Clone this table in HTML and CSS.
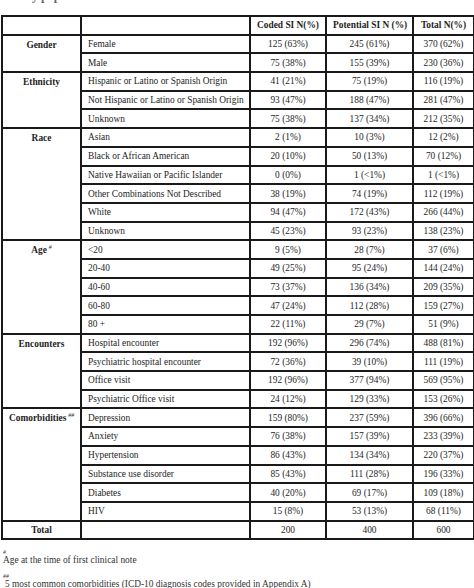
FILE: index.html
```html
<!DOCTYPE html>
<html>
<head>
<meta charset="utf-8">
<link rel="stylesheet" href="styles.css">
</head>
<body>
<div class="caption-clip"><span class="caption-text">Study population</span></div>
<table class="demo">
  <colgroup>
    <col class="c1"><col class="c2"><col class="c3"><col class="c4"><col class="c5">
  </colgroup>
  <thead>
    <tr><th></th><th></th><th>Coded SI N(%)</th><th>Potential SI N (%)</th><th>Total N(%)</th></tr>
  </thead>
  <tbody>
    <tr><td class="grp" rowspan="2">Gender</td><td class="cat">Female</td><td>125 (63%)</td><td>245 (61%)</td><td>370 (62%)</td></tr>
    <tr><td class="cat">Male</td><td>75 (38%)</td><td>155 (39%)</td><td>230 (36%)</td></tr>
    <tr><td class="grp" rowspan="3">Ethnicity</td><td class="cat">Hispanic or Latino or Spanish Origin</td><td>41 (21%)</td><td>75 (19%)</td><td>116 (19%)</td></tr>
    <tr><td class="cat">Not Hispanic or Latino or Spanish Origin</td><td>93 (47%)</td><td>188 (47%)</td><td>281 (47%)</td></tr>
    <tr><td class="cat">Unknown</td><td>75 (38%)</td><td>137 (34%)</td><td>212 (35%)</td></tr>
    <tr><td class="grp" rowspan="6">Race</td><td class="cat">Asian</td><td>2 (1%)</td><td>10 (3%)</td><td>12 (2%)</td></tr>
    <tr><td class="cat">Black or African American</td><td>20 (10%)</td><td>50 (13%)</td><td>70 (12%)</td></tr>
    <tr><td class="cat">Native Hawaiian or Pacific Islander</td><td>0 (0%)</td><td>1 (&lt;1%)</td><td>1 (&lt;1%)</td></tr>
    <tr><td class="cat">Other Combinations Not Described</td><td>38 (19%)</td><td>74 (19%)</td><td>112 (19%)</td></tr>
    <tr><td class="cat">White</td><td>94 (47%)</td><td>172 (43%)</td><td>266 (44%)</td></tr>
    <tr><td class="cat">Unknown</td><td>45 (23%)</td><td>93 (23%)</td><td>138 (23%)</td></tr>
    <tr><td class="grp" rowspan="5">Age<sup>#</sup></td><td class="cat">&lt;20</td><td>9 (5%)</td><td>28 (7%)</td><td>37 (6%)</td></tr>
    <tr><td class="cat">20-40</td><td>49 (25%)</td><td>95 (24%)</td><td>144 (24%)</td></tr>
    <tr><td class="cat">40-60</td><td>73 (37%)</td><td>136 (34%)</td><td>209 (35%)</td></tr>
    <tr><td class="cat">60-80</td><td>47 (24%)</td><td>112 (28%)</td><td>159 (27%)</td></tr>
    <tr><td class="cat">80 +</td><td>22 (11%)</td><td>29 (7%)</td><td>51 (9%)</td></tr>
    <tr><td class="grp" rowspan="4">Encounters</td><td class="cat">Hospital encounter</td><td>192 (96%)</td><td>296 (74%)</td><td>488 (81%)</td></tr>
    <tr><td class="cat">Psychiatric hospital encounter</td><td>72 (36%)</td><td>39 (10%)</td><td>111 (19%)</td></tr>
    <tr><td class="cat">Office visit</td><td>192 (96%)</td><td>377 (94%)</td><td>569 (95%)</td></tr>
    <tr><td class="cat">Psychiatric Office visit</td><td>24 (12%)</td><td>129 (33%)</td><td>153 (26%)</td></tr>
    <tr><td class="grp" rowspan="6">Comorbidities<sup>##</sup></td><td class="cat">Depression</td><td>159 (80%)</td><td>237 (59%)</td><td>396 (66%)</td></tr>
    <tr><td class="cat">Anxiety</td><td>76 (38%)</td><td>157 (39%)</td><td>233 (39%)</td></tr>
    <tr><td class="cat">Hypertension</td><td>86 (43%)</td><td>134 (34%)</td><td>220 (37%)</td></tr>
    <tr><td class="cat">Substance use disorder</td><td>85 (43%)</td><td>111 (28%)</td><td>196 (33%)</td></tr>
    <tr><td class="cat">Diabetes</td><td>40 (20%)</td><td>69 (17%)</td><td>109 (18%)</td></tr>
    <tr><td class="cat">HIV</td><td>15 (8%)</td><td>53 (13%)</td><td>68 (11%)</td></tr>
    <tr><td class="grp total">Total</td><td class="cat"></td><td>200</td><td>400</td><td>600</td></tr>
  </tbody>
</table>
<div class="notes">
  <p class="note"><sup>#</sup><br>Age at the time of first clinical note</p>
  <p class="note note2"><sup>##</sup><br><span class="indent">5 most common comorbidities (ICD-10 diagnosis codes provided in Appendix A)</span></p>
</div>
</body>
</html>
```

FILE: styles.css
```css
html, body {
  margin: 0;
  padding: 0;
  background: #ffffff;
}
body {
  font-family: "Liberation Serif", "Times New Roman", serif;
  font-size: 9.4px;
  color: #1e1e1e;
  width: 474px;
  height: 588px;
  overflow: hidden;
}
.caption-clip {
  height: 5px;
  overflow: hidden;
  margin-bottom: 10px;
}
.caption-text {
  display: block;
  font-weight: bold;
  font-size: 12px;
  line-height: 12px;
  margin-top: -10px;
  padding-left: 8px;
  color: #666;
}
.demo {
  border-collapse: collapse;
  table-layout: fixed;
  width: 472px;
  margin-left: 1px;
  border: 2px solid #1a1a1a;
}
.c1 { width: 79px; }
.c2 { width: 169px; }
.c3 { width: 76px; }
.c4 { width: 87px; }
.c5 { width: 61px; }
.demo tr {
  height: 18.7px;
}
.demo th, .demo td {
  border: 2px solid #1a1a1a;
  padding: 0 6px;
  text-align: center;
  vertical-align: middle;
  white-space: nowrap;
  line-height: 12px;
}
.demo th {
  font-weight: bold;
}
.demo td.cat {
  text-align: left;
}
.demo td.grp {
  font-weight: bold;
  vertical-align: top;
  padding-top: 3px;
}
.demo td.grp.total {
  vertical-align: middle;
  padding-top: 0;
}
.demo sup {
  font-size: 6px;
  font-weight: normal;
  font-style: italic;
  vertical-align: 4px;
  line-height: 0;
  margin-left: 2px;
}
.notes {
  padding-left: 3px;
  margin-top: 7px;
  color: #333;
}
.note {
  margin: 0;
  line-height: 9px;
}
.note sup {
  font-size: 6px;
  font-style: italic;
  vertical-align: baseline;
  line-height: 6px;
}
.note2 {
  margin-top: 6px;
}
.indent {
  padding-left: 2px;
}
```
